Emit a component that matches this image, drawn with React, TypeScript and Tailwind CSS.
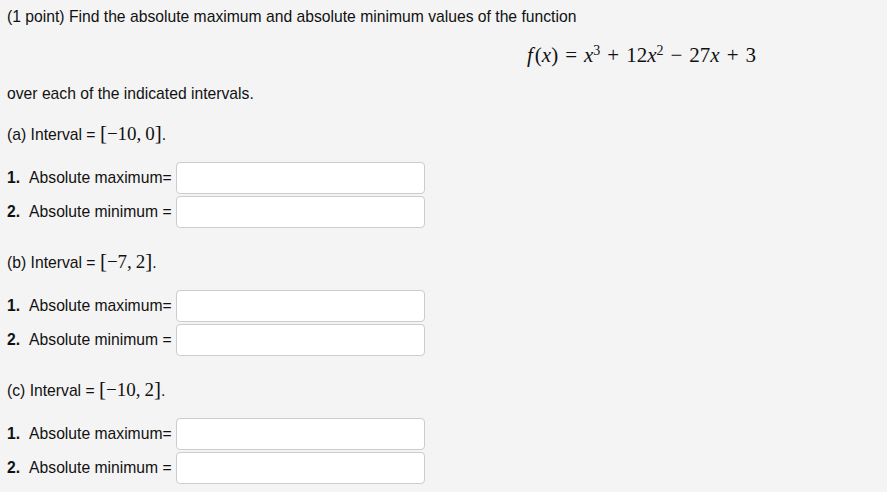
import React from "react";

const serif = { fontFamily: '"Liberation Serif", "DejaVu Serif", serif' };

function Op({ c }: { c: string }) {
  return <span className="mx-[7px]">{c}</span>;
}

function Interval({ letter, a, b }: { letter: string; a: string; b: string }) {
  return (
    <div className="h-[18px] leading-[18px] whitespace-nowrap">
      ({letter}) Interval ={" "}
      <span className="text-[19px] leading-none" style={serif}>
        <span className="text-[21px]">[</span>−{a},<span className="ml-[4px]">{b}</span>
        <span className="text-[21px]">]</span>
      </span>
      .
    </div>
  );
}

function Row({ n, label }: { n: string; label: string }) {
  return (
    <div className="flex items-center h-[32px]">
      <div className="w-[169px] whitespace-nowrap">
        <span className="font-bold mr-[9px]">{n}.</span>
        {label}
      </div>
      <div className="w-[249px] h-[32px] bg-white border border-[#cccccc] rounded-[4px]" />
    </div>
  );
}

function Section({ letter, a, b, first }: { letter: string; a: string; b: string; first?: boolean }) {
  return (
    <div className={first ? "mt-[20px]" : "mt-[23px]"}>
      <Interval letter={letter} a={a} b={b} />
      <div className="mt-[21px] flex flex-col gap-[2px]">
        <Row n="1" label="Absolute maximum=" />
        <Row n="2" label="Absolute minimum =" />
      </div>
    </div>
  );
}

export default function App() {
  return (
    <div
      className="w-[887px] h-[492px] bg-[#f4f4f4] text-[15.7px] text-[#111] pl-[7px] pt-[8px] overflow-hidden"
      style={{ fontFamily: '"Liberation Sans", Arial, sans-serif' }}
    >
      <div className="h-[18px] leading-[18px] whitespace-nowrap">
        (1 point) Find the absolute maximum and absolute minimum values of the function
      </div>
      <div className="mt-[17px] h-[24px] leading-[24px] flex pl-[520px] text-[21px] whitespace-nowrap" style={serif}>
        <span>
          <i className="mr-[2px]">f</i>(<i>x</i>)<Op c="=" /><i>x</i>
          <sup className="text-[14px]">3</sup>
          <Op c="+" />12<i>x</i>
          <sup className="text-[14px]">2</sup>
          <Op c="−" />27<i>x</i>
          <Op c="+" />3
        </span>
      </div>
      <div className="mt-[18px] h-[18px] leading-[18px]">over each of the indicated intervals.</div>
      <Section letter="a" a="10" b="0" first />
      <Section letter="b" a="7" b="2" />
      <Section letter="c" a="10" b="2" />
    </div>
  );
}
